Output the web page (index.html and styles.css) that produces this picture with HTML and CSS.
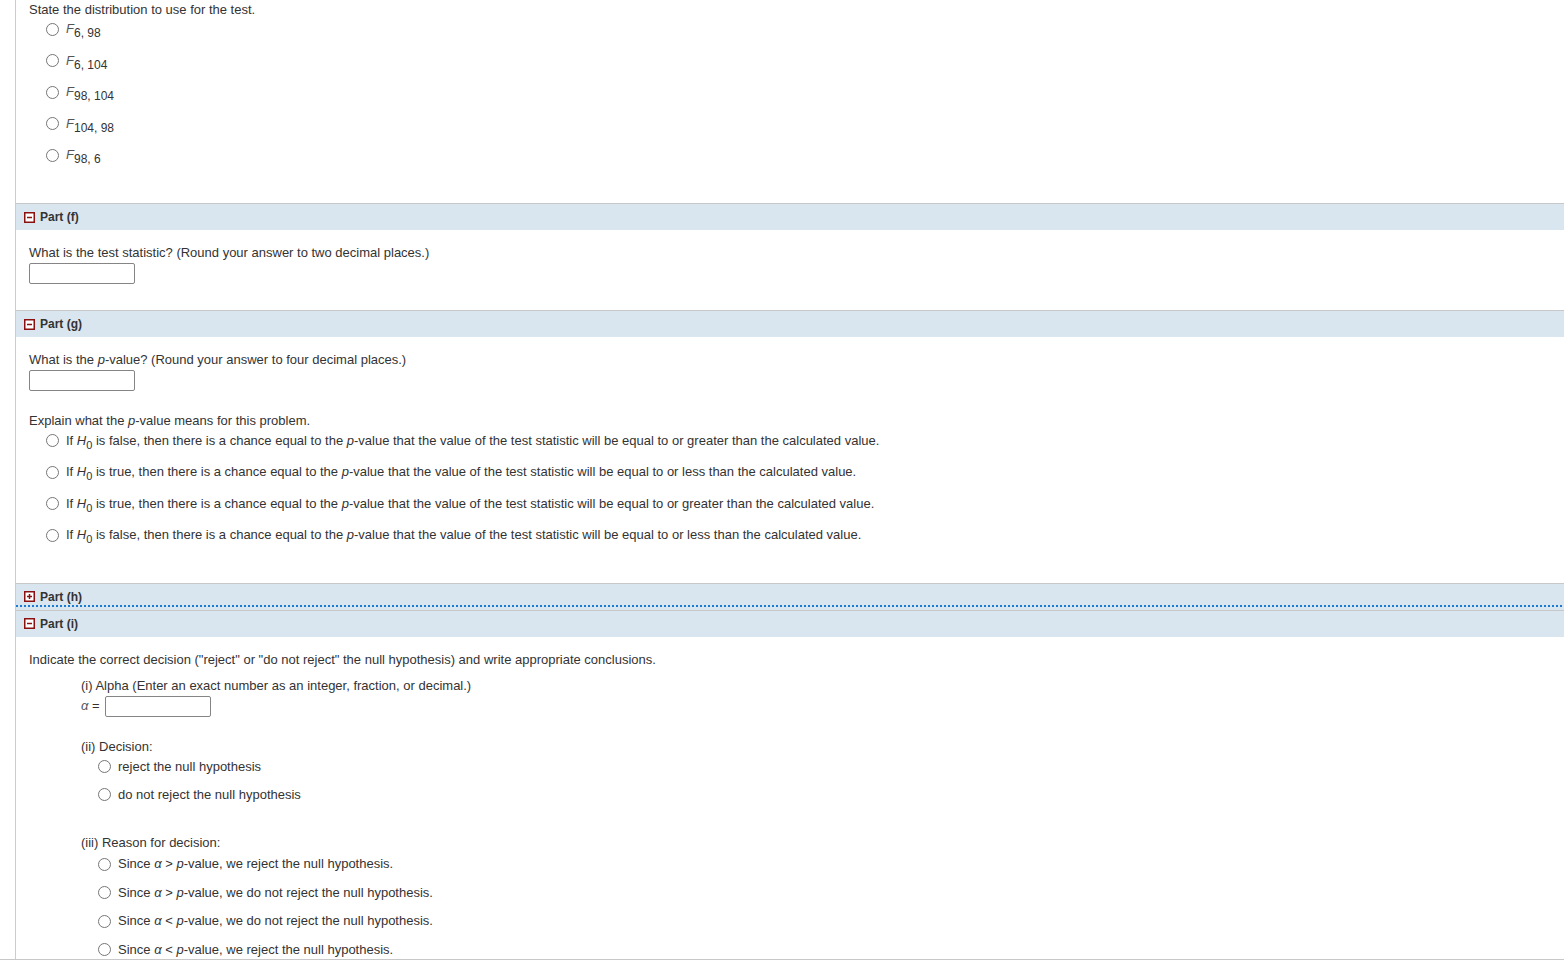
FILE: index.html
```html
<!DOCTYPE html>
<html lang="en">
<head>
<meta charset="utf-8">
<title>Part questions</title>
<link rel="stylesheet" href="styles.css">
</head>
<body>
<div class="viewport">
  <div class="page">

    <section class="content content-first">
      <div class="q">State the distribution to use for the test.</div>
      <ul class="choices choices-tall">
        <li><span class="radio"></span><span><i class="var">F</i><sub>6, 98</sub></span></li>
        <li><span class="radio"></span><span><i class="var">F</i><sub>6, 104</sub></span></li>
        <li><span class="radio"></span><span><i class="var">F</i><sub>98, 104</sub></span></li>
        <li><span class="radio"></span><span><i class="var">F</i><sub>104, 98</sub></span></li>
        <li><span class="radio"></span><span><i class="var">F</i><sub>98, 6</sub></span></li>
      </ul>
    </section>

    <div class="part-head">
      <svg class="toggle" width="11" height="11" viewBox="0 0 11 11"><rect x="0.75" y="0.75" width="9.5" height="9.5" fill="#fff" stroke="#8b1111" stroke-width="1.5"/><line x1="3" y1="5.5" x2="8" y2="5.5" stroke="#8b1111" stroke-width="1.5"/></svg>
      <span class="part-title">Part (f)</span>
    </div>
    <section class="content content-input">
      <div class="q">What is the test statistic? (Round your answer to two decimal places.)</div>
      <input class="answer" type="text">
    </section>

    <div class="part-head">
      <svg class="toggle" width="11" height="11" viewBox="0 0 11 11"><rect x="0.75" y="0.75" width="9.5" height="9.5" fill="#fff" stroke="#8b1111" stroke-width="1.5"/><line x1="3" y1="5.5" x2="8" y2="5.5" stroke="#8b1111" stroke-width="1.5"/></svg>
      <span class="part-title">Part (g)</span>
    </div>
    <section class="content content-g">
      <div class="q">What is the <i>p</i>-value? (Round your answer to four decimal places.)</div>
      <input class="answer" type="text">
      <div class="q q-gap">Explain what the <i>p</i>-value means for this problem.</div>
      <ul class="choices choices-tall choices-explain">
        <li><span class="radio"></span><span>If <i>H</i><sub class="small">0</sub> is false, then there is a chance equal to the <i>p</i>-value that the value of the test statistic will be equal to or greater than the calculated value.</span></li>
        <li><span class="radio"></span><span>If <i>H</i><sub class="small">0</sub> is true, then there is a chance equal to the <i>p</i>-value that the value of the test statistic will be equal to or less than the calculated value.</span></li>
        <li><span class="radio"></span><span>If <i>H</i><sub class="small">0</sub> is true, then there is a chance equal to the <i>p</i>-value that the value of the test statistic will be equal to or greater than the calculated value.</span></li>
        <li><span class="radio"></span><span>If <i>H</i><sub class="small">0</sub> is false, then there is a chance equal to the <i>p</i>-value that the value of the test statistic will be equal to or less than the calculated value.</span></li>
      </ul>
    </section>

    <div class="part-head part-head-focus">
      <svg class="toggle" width="11" height="11" viewBox="0 0 11 11"><rect x="0.75" y="0.75" width="9.5" height="9.5" fill="#fff" stroke="#8b1111" stroke-width="1.5"/><line x1="3" y1="5.5" x2="8" y2="5.5" stroke="#8b1111" stroke-width="1.5"/><line x1="5.5" y1="3" x2="5.5" y2="8" stroke="#8b1111" stroke-width="1.5"/></svg>
      <span class="part-title">Part (h)</span>
    </div>

    <div class="part-head">
      <svg class="toggle" width="11" height="11" viewBox="0 0 11 11"><rect x="0.75" y="0.75" width="9.5" height="9.5" fill="#fff" stroke="#8b1111" stroke-width="1.5"/><line x1="3" y1="5.5" x2="8" y2="5.5" stroke="#8b1111" stroke-width="1.5"/></svg>
      <span class="part-title">Part (i)</span>
    </div>
    <section class="content content-i">
      <div class="q">Indicate the correct decision ("reject" or "do not reject" the null hypothesis) and write appropriate conclusions.</div>
      <div class="sub-part">
        <div class="q q-alpha">(i) Alpha (Enter an exact number as an integer, fraction, or decimal.)</div>
        <div class="alpha-row"><span><i>α</i> =</span><input class="answer" type="text"></div>
        <div class="q q-decision">(ii) Decision:</div>
        <ul class="choices choices-short">
          <li><span class="radio"></span><span>reject the null hypothesis</span></li>
          <li><span class="radio"></span><span>do not reject the null hypothesis</span></li>
        </ul>
        <div class="q q-reason">(iii) Reason for decision:</div>
        <ul class="choices choices-reason">
          <li><span class="radio"></span><span>Since <i>α</i> &gt; <i>p</i>-value, we reject the null hypothesis.</span></li>
          <li><span class="radio"></span><span>Since <i>α</i> &gt; <i>p</i>-value, we do not reject the null hypothesis.</span></li>
          <li><span class="radio"></span><span>Since <i>α</i> &lt; <i>p</i>-value, we do not reject the null hypothesis.</span></li>
          <li><span class="radio"></span><span>Since <i>α</i> &lt; <i>p</i>-value, we reject the null hypothesis.</span></li>
        </ul>
      </div>
    </section>

  </div>
</div>
</body>
</html>
```

FILE: styles.css
```css
html, body {
  margin: 0;
  padding: 0;
  background: #ffffff;
}

body {
  font-family: "Liberation Sans", Arial, sans-serif;
  font-size: 13px;
  color: #333333;
}

.viewport {
  border-bottom: 1px solid #c8c8c8;
}

.page {
  margin-left: 15px;
  border-left: 1px solid #cccccc;
  height: 959px;
  overflow: hidden;
}

.content {
  padding-left: 13px;
}

.content-first {
  padding-top: 1.5px;
  padding-bottom: 40px;
}

.content-input {
  padding-top: 15px;
  padding-bottom: 26px;
}

.content-g {
  padding-top: 15px;
  padding-bottom: 39.5px;
}

.content-i {
  padding-top: 15px;
}

.q {
  line-height: 16px;
  height: 16px;
  white-space: nowrap;
}

.q-gap {
  margin-top: 21.5px;
}

.q-alpha {
  margin-top: 10px;
}

.q-decision {
  margin-top: 22.5px;
}

.q-reason {
  margin-top: 32px;
}

.answer {
  display: block;
  box-sizing: border-box;
  width: 106px;
  height: 21px;
  margin: 2px 0 0 0;
  padding: 0 3px;
  border: 1px solid #858585;
  border-radius: 2px;
  background: #ffffff;
  font: inherit;
}

.choices {
  list-style: none;
  margin: 3.5px 0 0 0;
  padding: 0;
}

.choices li {
  display: flex;
  align-items: center;
  height: 16px;
  line-height: 16px;
  padding-left: 17px;
  white-space: nowrap;
}

.choices-tall li + li {
  margin-top: 15.5px;
}

.choices-explain {
  margin-top: 4px;
}

.choices-short li + li {
  margin-top: 12px;
}

.choices-reason {
  margin-top: 5.5px;
}

.choices-reason li + li {
  margin-top: 12.6px;
}

.radio {
  flex: none;
  box-sizing: border-box;
  width: 13px;
  height: 13px;
  margin-right: 7px;
  border: 1px solid #767676;
  border-radius: 50%;
  background: #ffffff;
}

.var {
  color: #555555;
}

sub {
  font-size: 12px;
  line-height: 0;
  vertical-align: -4px;
}

sub.small {
  font-size: 11px;
}

.part-head {
  display: flex;
  align-items: center;
  height: 26px;
  border-top: 1px solid #c8c8c8;
  background: #d9e5ef;
  padding-left: 8px;
}

.part-head-focus {
  background:
    repeating-linear-gradient(to right, #1a7bd4 0 2px, transparent 2px 4px) left bottom 3px / 100% 2px no-repeat,
    #d9e5ef;
}

.toggle {
  flex: none;
  display: block;
}

.part-title {
  margin-left: 5px;
  font-size: 12px;
  font-weight: bold;
  line-height: 14px;
  color: #333333;
}

.sub-part {
  margin-left: 52px;
}

.alpha-row {
  display: flex;
  align-items: center;
  height: 21px;
  margin-top: 2px;
  line-height: 16px;
}

.alpha-row i {
  color: #555555;
}

.alpha-row .answer {
  margin: 0 0 0 5px;
}
```
